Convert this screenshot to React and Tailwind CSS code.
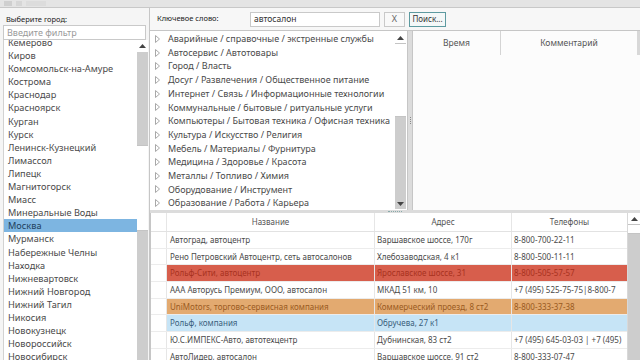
import React from 'react';

const cities = [
  'Кемерово', 'Киров', 'Комсомольск-на-Амуре', 'Кострома', 'Краснодар', 'Красноярск',
  'Курган', 'Курск', 'Ленинск-Кузнецкий', 'Лимассол', 'Липецк', 'Магнитогорск', 'Миасс',
  'Минеральные Воды', 'Москва', 'Мурманск', 'Набережные Челны', 'Находка', 'Нижневартовск',
  'Нижний Новгород', 'Нижний Тагил', 'Никосия', 'Новокузнецк', 'Новороссийск', 'Новосибирск',
];

const categories = [
  'Аварийные / справочные / экстренные службы',
  'Автосервис / Автотовары',
  'Город / Власть',
  'Досуг / Развлечения / Общественное питание',
  'Интернет / Связь / Информационные технологии',
  'Коммунальные / бытовые / ритуальные услуги',
  'Компьютеры / Бытовая техника / Офисная техника',
  'Культура / Искусство / Религия',
  'Мебель / Материалы / Фурнитура',
  'Медицина / Здоровье / Красота',
  'Металлы / Топливо / Химия',
  'Оборудование / Инструмент',
  'Образование / Работа / Карьера',
];

const rows = [
  { name: 'Автоград, автоцентр', addr: 'Варшавское шоссе, 170г', tel: '8-800-700-22-11' },
  { name: 'Рено Петровский Автоцентр, сеть автосалонов', addr: 'Хлебозаводская, 4 к1', tel: '8-800-500-11-11' },
  { name: 'Рольф-Сити, автоцентр', addr: 'Ярославское шоссе, 31', tel: '8-800-505-57-57', tone: 'red' },
  { name: 'ААА Авторусь Премиум, ООО, автосалон', addr: 'МКАД 51 км, 10', tel: '+7 (495) 525-75-75|8-800-7' },
  { name: 'UniMotors, торгово-сервисная компания', addr: 'Коммерческий проезд, 8 ст2', tel: '8-800-333-37-38', tone: 'orange' },
  { name: 'Рольф, компания', addr: 'Обручева, 27 к1', tel: '', tone: 'blue' },
  { name: 'Ю.С.ИМПЕКС-Авто, автотехцентр', addr: 'Дубнинская, 83 ст2', tel: '+7 (495) 645-03-03 | +7 (495)' },
  { name: 'АвтоЛидер, автосалон', addr: 'Варшавское шоссе, 91 ст2', tel: '8-800-333-07-47' },
];

const toneClass = {
  red: 'bg-[#d75e4c] text-[#a8321f]',
  orange: 'bg-[#e3aa70] text-[#9a5a22]',
  blue: 'bg-[#c6e4f6] text-[#3a5f7c]',
};

const ArrowUp = () => (
  <svg width="7" height="4" viewBox="0 0 7 4"><path d="M0 4 L3.5 0 L7 4 Z" fill="#444" /></svg>
);
const ArrowDown = () => (
  <svg width="7" height="4" viewBox="0 0 7 4"><path d="M0 0 L3.5 4 L7 0 Z" fill="#444" /></svg>
);

const Expander = () => (
  <svg width="5" height="8" viewBox="0 0 5 8" className="shrink-0">
    <path d="M0.5 0.5 L4.5 4 L0.5 7.5 Z" fill="none" stroke="#a8a8a8" strokeWidth="1" />
  </svg>
);

export default function App() {
  return (
    <div
      className="w-[640px] h-[360px] overflow-hidden bg-[#eeeeee] flex flex-col text-[#4a4a4a]"
      style={{ fontFamily: '"Noto Sans", "Open Sans", sans-serif' }}
    >
      {/* верхняя полоса */}
      <div className="h-[8px] shrink-0 bg-[#e4e4e4] border-b border-[#c8c8c8] flex items-center gap-1 px-1">
        <div className="w-[8px] h-[5px] bg-[#cfcfcf]" />
        <div className="w-[6px] h-[5px] bg-[#d6d6d6]" />
        <div className="w-[20px] h-[5px] bg-[#dcdcdc]" />
      </div>

      <div className="flex flex-1 min-h-0">
        {/* список городов */}
        <div className="w-[150px] shrink-0 flex flex-col bg-[#f5f5f5] border-r border-[#c6c6c6]">
          <div className="h-[17px] shrink-0 flex items-end px-[6px] text-[7.5px] text-[#222]">Выберите город:</div>
          <div className="mx-[3px] h-[15px] shrink-0 bg-white border border-[#c9c9c9] flex items-center px-[3px] text-[9px] text-[#9a9a9a]">
            Введите фильтр
          </div>
          <div className="flex flex-1 min-h-0 ml-[3px] mr-[1px] bg-white border-l border-[#d2d2d2]">
            <div className="flex-1 overflow-hidden">
              <div className="-mt-[4px]">
                {cities.map((c) => (
                  <div
                    key={c}
                    className={`h-[13.1px] leading-[13.1px] px-[4px] text-[9.2px] whitespace-nowrap ${c === 'Москва' ? 'bg-[#7db5e1] text-[#1f3f5c]' : ''}`}
                  >
                    {c}
                  </div>
                ))}
              </div>
            </div>
            <div className="w-[11px] shrink-0 flex flex-col bg-[#cdcdcd]">
              <div className="h-[12px] bg-white flex items-center justify-center"><ArrowUp /></div>
              <div className="h-[93px]" />
              <div className="h-[86px] bg-white border-y border-[#c4c4c4]" />
              <div className="flex-1" />
            </div>
          </div>
        </div>

        {/* правая часть */}
        <div className="flex-1 flex flex-col min-w-0">
          <div className="h-[23px] shrink-0 flex items-center pl-[7px] bg-[#f7f7f7] border-b border-[#c6c6c6]">
            <span className="text-[7.5px] text-[#222] w-[93px]">Ключевое слово:</span>
            <div className="w-[130px] h-[15px] bg-white border border-[#c9c9c9] flex items-center px-[3px] text-[8.5px] text-[#333]">автосалон</div>
            <div className="ml-[4px] w-[21px] h-[15px] border border-[#c9c9c9] bg-[#f9f9f9] flex items-center justify-center text-[9px] text-[#666]">X</div>
            <div className="ml-[4px] w-[37px] h-[15px] border border-[#5d9aa0] bg-[#f4f8f8] flex items-center justify-center text-[8px] text-[#333]">Поиск...</div>
          </div>

          {/* дерево + комментарии */}
          <div className="h-[179px] shrink-0 flex">
            <div className="w-[258px] shrink-0 flex bg-white border-r border-[#c6c6c6]">
              <div className="flex-1 overflow-hidden pt-[1px]">
                {categories.map((c) => (
                  <div key={c} className="h-[13.7px] flex items-center gap-[8px] pl-[5px] text-[9px] whitespace-nowrap">
                    <Expander />
                    <span>{c}</span>
                  </div>
                ))}
              </div>
              <div className="w-[11px] shrink-0 flex flex-col bg-[#cdcdcd] mr-[1px] my-[1px]">
                <div className="h-[11px] bg-white flex items-center justify-center"><ArrowUp /></div>
                <div className="h-[74px] bg-white border-y border-[#c4c4c4]" />
                <div className="flex-1" />
                <div className="h-[11px] flex items-center justify-center"><ArrowDown /></div>
              </div>
            </div>
            <div className="w-[4px] shrink-0 bg-[#dcdcdc] flex flex-col items-center justify-center gap-[1px]">
              <div className="w-[1px] h-[1px] bg-[#888]" />
              <div className="w-[1px] h-[1px] bg-[#888]" />
              <div className="w-[1px] h-[1px] bg-[#888]" />
              <div className="w-[1px] h-[1px] bg-[#888]" />
            </div>
            <div className="flex-1 bg-[#fcfcfc] border-l border-[#c6c6c6] flex flex-col">
              <div className="h-[24px] flex text-[8.5px] text-[#555]">
                <div className="w-[88px] flex items-center justify-center border-r border-[#d4d4d4]">Время</div>
                <div className="flex-1 flex items-center justify-center">Комментарий</div>
                <div className="w-[3px] bg-[#d8d8d8]" />
              </div>
              <div className="flex-1" />
            </div>
          </div>

          {/* горизонтальный разделитель */}
          <div className="h-[3px] shrink-0 bg-[#dcdcdc] flex items-center justify-center">
            <div className="w-[14px] h-[1px] border-t border-dotted border-[#8aa]" />
          </div>

          {/* таблица */}
          <div className="flex-1 flex bg-white min-h-0">
            <div className="flex-1 overflow-hidden border-l border-[#c6c6c6]">
              <div className="flex h-[19px] text-[8px] text-[#555] border-b border-[#e2e2e2]">
                <div className="w-[16px] shrink-0 border-r border-[#e6e6e6]" />
                <div className="w-[208px] shrink-0 flex items-center justify-center border-r border-[#e6e6e6]">Название</div>
                <div className="w-[137px] shrink-0 flex items-center justify-center border-r border-[#e6e6e6]">Адрес</div>
                <div className="flex-1 flex items-center justify-center">Телефоны</div>
              </div>
              {rows.map((r) => (
                <div key={r.name} className={`flex h-[16.7px] text-[8px] whitespace-nowrap border-b border-[#ececec] ${r.tone ? toneClass[r.tone] : ''}`}>
                  <div className="w-[16px] shrink-0 bg-white border-r border-[#e6e6e6]" />
                  <div className="w-[208px] shrink-0 flex items-center px-[3px] border-r border-[#e6e6e6] overflow-hidden">{r.name}</div>
                  <div className="w-[137px] shrink-0 flex items-center px-[2px] border-r border-[#e6e6e6] overflow-hidden">{r.addr}</div>
                  <div className="flex-1 flex items-center px-[2px] overflow-hidden">{r.tel}</div>
                </div>
              ))}
            </div>
            <div className="w-[13px] shrink-0 flex flex-col bg-[#cdcdcd] border-l border-[#d8d8d8]">
              <div className="h-[11px] bg-white flex items-center justify-center"><ArrowUp /></div>
              <div className="h-[10px] bg-white border-y border-[#c4c4c4]" />
              <div className="flex-1" />
            </div>
          </div>
        </div>
      </div>
    </div>
  );
}
